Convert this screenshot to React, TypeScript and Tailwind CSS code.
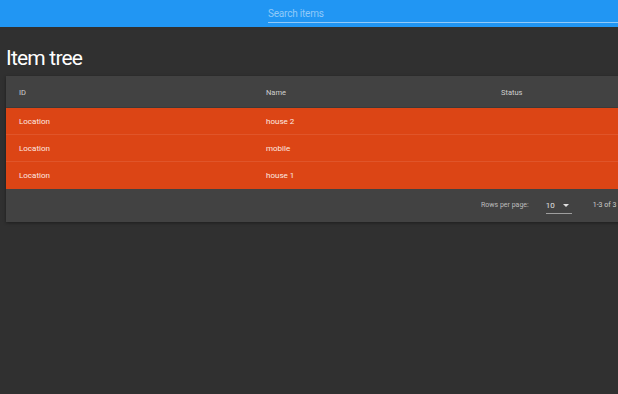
const rows = [
  { id: "Location", name: "house 2", status: "" },
  { id: "Location", name: "mobile", status: "" },
  { id: "Location", name: "house 1", status: "" },
];

export default function App() {
  return (
    <div className="h-[394px] w-[618px] overflow-hidden bg-[#303030] font-['Roboto',sans-serif] text-white">
      <header className="flex h-[27px] bg-[#2196f3]">
        <div className="ml-[268px] mt-[7px] flex h-[16px] grow flex-col border-b border-[#90caf9]">
          <input
            className="w-full bg-transparent pt-[1px] text-[10px] leading-[12px] tracking-[-0.2px] text-white outline-none placeholder:text-[#90caf9]"
            placeholder="Search items"
          />
        </div>
      </header>

      <h1 className="ml-[6px] mt-[15px] h-[34px] text-[21px] font-normal leading-[32px] tracking-[-0.8px]">Item tree</h1>

      <div className="ml-[6px] w-[640px] bg-[#424242] shadow-[0_1px_3px_rgba(0,0,0,0.4)]">
        <div className="flex h-[32px] items-center border-b border-[#3a3a3a] pt-[2px] text-[7.5px] text-[#cfcfcf]">
          <div className="w-[260px] pl-[13px]">ID</div>
          <div className="w-[235px]">Name</div>
          <div className="grow">Status</div>
        </div>
        {rows.map((r, i) => (
          <div
            key={i}
            className={`flex h-[27px] items-center bg-[#dc4515] pt-[1px] text-[8px] text-[#fde9e0] ${
              i < rows.length - 1 ? "border-b border-[#e0552a]" : ""
            }`}
          >
            <div className="w-[260px] pl-[13px]">{r.id}</div>
            <div className="w-[235px]">{r.name}</div>
            <div className="grow">{r.status}</div>
          </div>
        ))}
        <div className="flex h-[33px] items-center text-[7px] text-[#bdbdbd]">
          <div className="ml-[475px]">Rows per page:</div>
          <div className="ml-[17px] flex h-[17px] w-[26px] items-center border-b border-[#9e9e9e] pt-[1px]">
            <span className="text-[8px] text-[#e0e0e0]">10</span>
            <svg className="ml-[8px]" width="6" height="3" viewBox="0 0 6 3">
              <path d="M0 0 L6 0 L3 3 Z" fill="#e0e0e0" />
            </svg>
          </div>
          <div className="ml-[21px] whitespace-nowrap text-[#cfcfcf]">1-3 of 3</div>
        </div>
      </div>
    </div>
  );
}
